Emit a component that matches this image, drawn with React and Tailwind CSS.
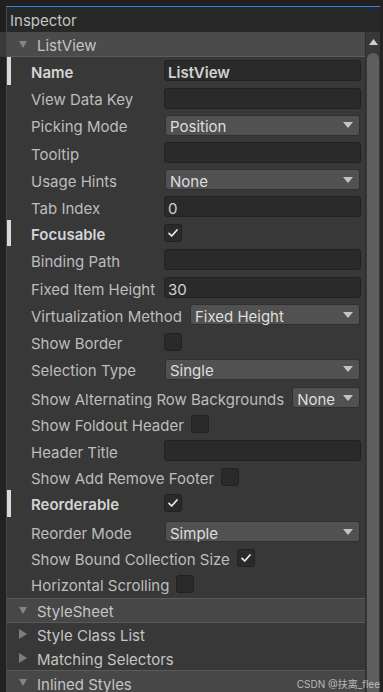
import React from "react";

const FONT = { fontFamily: "Inter, 'Noto Sans', 'Noto Sans CJK SC', sans-serif" };

function Arrow() {
  return (
    <svg width="10" height="6" viewBox="0 0 10 6" className="shrink-0">
      <path d="M0 0 L10 0 L5 6 Z" fill="#c4c4c4" />
    </svg>
  );
}

function Check() {
  return (
    <svg width="12" height="10" viewBox="0 0 12 10">
      <path d="M2 5.4 L4.7 8 L10 2" stroke="#eeeeee" strokeWidth="1.7" fill="none" strokeLinecap="round" strokeLinejoin="round" />
    </svg>
  );
}

function TextField({ value, bold }) {
  return (
    <div className={"flex-1 h-[21px] bg-[#2a2a2a] border border-[#212121] rounded-[3px] flex items-center pl-[3px] pt-[3px] text-[#d2d2d2] " + (bold ? "font-semibold" : "")}>
      {value}
    </div>
  );
}

function Dropdown({ value }) {
  return (
    <div className="flex-1 h-[21px] mx-[1px] bg-[#515151] border border-[#303030] rounded-[3px] flex items-center justify-between pl-[4px] pr-[6px] text-[#dedede]">
      <span className="pt-[3px]">{value}</span>
      <Arrow />
    </div>
  );
}

function Checkbox({ checked }) {
  return (
    <div className="w-[18px] h-[18px] shrink-0 bg-[#2a2a2a] border border-[#212121] rounded-[3px] flex items-center justify-center">
      {checked ? <Check /> : null}
    </div>
  );
}

function Row({ label, h, bold, children }) {
  return (
    <div className="flex items-center pr-[4px]" style={{ height: h }}>
      <div className={"w-[4px] self-stretch shrink-0 " + (bold ? "bg-[#d9d9d9]" : "")} />
      <div className={"min-w-[153px] pl-[20px] pr-[7px] pt-[3px] shrink-0 whitespace-nowrap " + (bold ? "font-semibold text-[#d4d4d4]" : "text-[#bdbdbd]")}>
        {label}
      </div>
      {children}
    </div>
  );
}

function DownTri() {
  return (
    <svg width="8" height="7" viewBox="0 0 8 7" className="ml-[12px] shrink-0">
      <path d="M0 0 L8 0 L4 7 Z" fill="#858585" />
    </svg>
  );
}

function SubFold({ title, h }) {
  return (
    <div className="flex items-center" style={{ height: h }}>
      <svg width="8" height="10" viewBox="0 0 8 10" className="ml-[12px] shrink-0">
        <path d="M0 0 L8 5 L0 10 Z" fill="#7d7d7d" />
      </svg>
      <span className="ml-[10px] pt-[3px] text-[#c4c4c4]">{title}</span>
    </div>
  );
}

export default function App() {
  return (
    <div className="w-[383px] h-[692px] bg-[#1e1e1e] overflow-hidden relative flex flex-col text-[15px] leading-none" style={FONT}>
      <div className="h-[6px] shrink-0 bg-[#202020]" />
      <div className="flex flex-1 min-h-0">
        {/* left gutter */}
        <div className="w-[6px] shrink-0 flex flex-col">
          <div className="h-[26px] bg-[#1f1f1f]" />
          <div className="h-[25px] bg-[#3a3a3a]" />
          <div className="flex-1 bg-[#222222]" />
        </div>
        {/* main panel */}
        <div className="w-[374px] shrink-0 flex flex-col border-l border-[#474747] border-t border-t-[#2f86e8]">
          <div className="h-[25px] shrink-0 bg-[#282828] flex items-center pl-[3px] pt-[2px] text-[#c4c4c4]">Inspector</div>
          <div className="flex flex-1 min-h-0">
            <div className="w-[358px] shrink-0 bg-[#383838] flex flex-col">
              <div className="flex items-center h-[25px] bg-[#4b4b4b] border-b border-[#5c5c5c] shrink-0">
                <DownTri />
                <span className="ml-[10px] pt-[2px] text-[#c4c4c4]">ListView</span>
              </div>
              <Row label="Name" h={28} bold><TextField value="ListView" bold /></Row>
              <Row label="View Data Key" h={27}><TextField value="" /></Row>
              <Row label="Picking Mode" h={28}><Dropdown value="Position" /></Row>
              <Row label="Tooltip" h={27}><TextField value="" /></Row>
              <Row label="Usage Hints" h={28}><Dropdown value="None" /></Row>
              <Row label="Tab Index" h={27}><TextField value="0" /></Row>
              <Row label="Focusable" h={26} bold><Checkbox checked /></Row>
              <Row label="Binding Path" h={28}><TextField value="" /></Row>
              <Row label="Fixed Item Height" h={28}><TextField value="30" /></Row>
              <Row label="Virtualization Method" h={27}><Dropdown value="Fixed Height" /></Row>
              <Row label="Show Border" h={27}><Checkbox /></Row>
              <Row label="Selection Type" h={29}><Dropdown value="Single" /></Row>
              <Row label="Show Alternating Row Backgrounds" h={28}><Dropdown value="None" /></Row>
              <Row label="Show Foldout Header" h={25}><Checkbox /></Row>
              <Row label="Header Title" h={29}><TextField value="" /></Row>
              <Row label="Show Add Remove Footer" h={25}><Checkbox /></Row>
              <Row label="Reorderable" h={28} bold><Checkbox checked /></Row>
              <Row label="Reorder Mode" h={29}><Dropdown value="Simple" /></Row>
              <Row label="Show Bound Collection Size" h={25}><Checkbox checked /></Row>
              <Row label="Horizontal Scrolling" h={27}><Checkbox /></Row>
              <div className="flex items-center h-[25px] bg-[#474747] border-t border-b border-[#5a5a5a] shrink-0">
                <DownTri />
                <span className="ml-[10px] pt-[3px] text-[#c4c4c4]">StyleSheet</span>
              </div>
              <SubFold title="Style Class List" h={24} />
              <SubFold title="Matching Selectors" h={24} />
              <div className="flex-1 bg-[#474747] border-t border-[#5a5a5a] flex items-start">
                <svg width="8" height="7" viewBox="0 0 8 7" className="ml-[12px] mt-[8px] shrink-0">
                  <path d="M0 0 L8 0 L4 7 Z" fill="#858585" />
                </svg>
                <span className="ml-[10px] mt-[6px] text-[#c4c4c4]">Inlined Styles</span>
              </div>
            </div>
            {/* scrollbar */}
            <div className="w-[15px] shrink-0 bg-[#383838] flex flex-col items-center border-l border-[#2e2e2e]">
              <svg width="9" height="6" viewBox="0 0 9 6" className="mt-[7px] shrink-0">
                <path d="M0 6 L9 6 L4.5 0 Z" fill="#cfcfcf" />
              </svg>
              <div className="mt-[8px] w-[12px] flex-1 bg-[#5e5e5e] rounded-t-full" />
            </div>
          </div>
        </div>
        {/* right edge */}
        <div className="flex-1 bg-[#232323]" />
      </div>
      <div className="absolute right-[3px] bottom-[1px] text-[10px] text-[#d8d8d8]/80 leading-[13px]">CSDN @扶离_flee</div>
    </div>
  );
}
